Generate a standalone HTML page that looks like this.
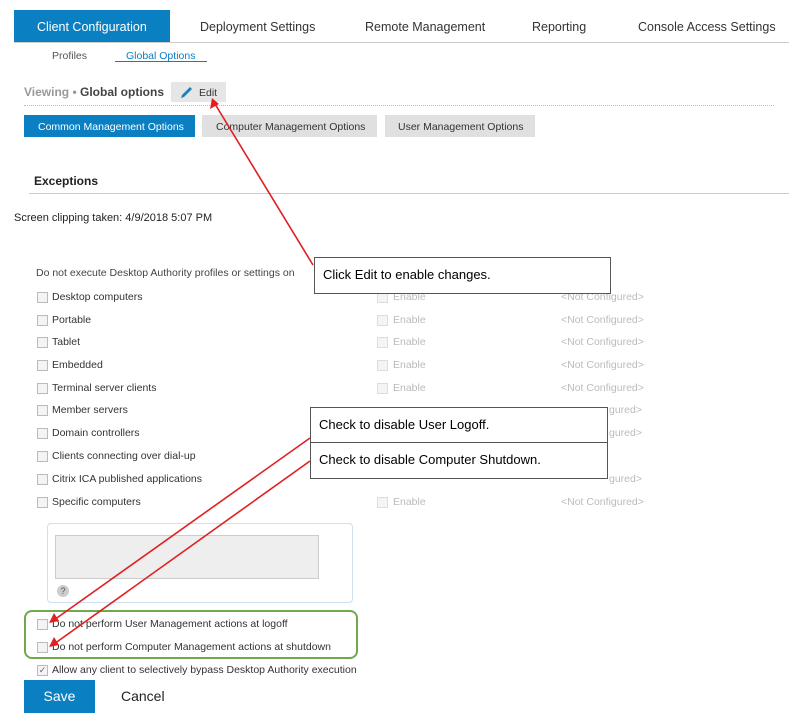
<!DOCTYPE html><html><head><style>
body{margin:0;width:789px;height:724px;background:#fff;font-family:"Liberation Sans",sans-serif;position:relative;overflow:hidden;color:#333}
.a{position:absolute;white-space:nowrap}
.t{font-size:12.5px;color:#333;line-height:16px}
.s{font-size:10.5px;line-height:12px}
.cb{position:absolute;width:9px;height:9px;border:1px solid #bbb;background:#f4f4f4}
.g{color:#bbb}
.box{position:absolute;border:1px solid #555;background:#fff;font-family:"Liberation Sans",sans-serif;font-size:13px;color:#000;box-sizing:border-box;padding:9px 0 0 8px}
</style></head><body>
<div class="a" style="left:14px;top:10px;width:156px;height:32px;background:#0a7fc2"></div>
<div class="a" style="left:14px;top:42px;width:775px;height:1px;background:#ccc"></div>
<div class="a t" style="left:37px;top:19px;color:#fff">Client Configuration</div>
<div class="a t" style="left:200px;top:19px">Deployment Settings</div>
<div class="a t" style="left:365px;top:19px">Remote Management</div>
<div class="a t" style="left:532px;top:19px">Reporting</div>
<div class="a t" style="left:638px;top:19px">Console Access Settings</div>
<div class="a s" style="left:52px;top:50px;color:#555">Profiles</div>
<div class="a s" style="left:126px;top:50px;color:#0a7fc2">Global Options</div>
<div class="a" style="left:115px;top:61px;width:92px;height:1px;background:#0a7fc2"></div>
<div class="a" style="left:24px;top:85px;font-size:12px;color:#999;font-weight:bold">Viewing •&nbsp;<span style="color:#444">Global options</span></div>
<div class="a" style="left:171px;top:82px;width:55px;height:20px;background:#e6e6e6"></div>
<svg class="a" style="left:179px;top:85px" width="16" height="15"><path d="M2 13 L3 10 L11 2 L13 4 L5 12 Z" fill="#1a7fc2"/></svg>
<div class="a s" style="left:199px;top:87px;color:#333">Edit</div>
<div class="a" style="left:24px;top:105px;width:750px;border-top:1px dotted #bbb"></div>
<div class="a" style="left:24px;top:115px;width:171px;height:22px;background:#0a7fc2"></div>
<div class="a" style="left:202px;top:115px;width:175px;height:22px;background:#e0e0e0"></div>
<div class="a" style="left:385px;top:115px;width:150px;height:22px;background:#e0e0e0"></div>
<div class="a s" style="left:38px;top:121px;color:#fff">Common Management Options</div>
<div class="a s" style="left:216px;top:121px">Computer Management Options</div>
<div class="a s" style="left:398px;top:121px">User Management Options</div>
<div class="a" style="left:34px;top:174px;font-size:12px;font-weight:bold;color:#222">Exceptions</div>
<div class="a" style="left:29px;top:193px;width:760px;height:1px;background:#ccc"></div>
<div class="a" style="left:14px;top:212px;font-size:11px;color:#222">Screen clipping taken: 4/9/2018 5:07 PM</div>
<div class="a s" style="left:36px;top:267px;color:#444">Do not execute Desktop Authority profiles or settings on</div>

<div class="cb" style="left:37px;top:292px"></div><div class="a s" style="left:52px;top:291px">Desktop computers</div>
<div class="cb" style="left:37px;top:315px"></div><div class="a s" style="left:52px;top:314px">Portable</div>
<div class="cb" style="left:37px;top:337px"></div><div class="a s" style="left:52px;top:336px">Tablet</div>
<div class="cb" style="left:37px;top:360px"></div><div class="a s" style="left:52px;top:359px">Embedded</div>
<div class="cb" style="left:37px;top:383px"></div><div class="a s" style="left:52px;top:382px">Terminal server clients</div>
<div class="cb" style="left:37px;top:405px"></div><div class="a s" style="left:52px;top:404px">Member servers</div>
<div class="cb" style="left:37px;top:428px"></div><div class="a s" style="left:52px;top:427px">Domain controllers</div>
<div class="cb" style="left:37px;top:451px"></div><div class="a s" style="left:52px;top:450px">Clients connecting over dial-up</div>
<div class="cb" style="left:37px;top:474px"></div><div class="a s" style="left:52px;top:473px">Citrix ICA published applications</div>
<div class="cb" style="left:37px;top:497px"></div><div class="a s" style="left:52px;top:496px">Specific computers</div>

<div class="cb" style="left:377px;top:292px;border-color:#ddd"></div><div class="a s g" style="left:393px;top:291px">Enable</div><div class="a s g" style="left:561px;top:291px">&lt;Not Configured&gt;</div>
<div class="cb" style="left:377px;top:315px;border-color:#ddd"></div><div class="a s g" style="left:393px;top:314px">Enable</div><div class="a s g" style="left:561px;top:314px">&lt;Not Configured&gt;</div>
<div class="cb" style="left:377px;top:337px;border-color:#ddd"></div><div class="a s g" style="left:393px;top:336px">Enable</div><div class="a s g" style="left:561px;top:336px">&lt;Not Configured&gt;</div>
<div class="cb" style="left:377px;top:360px;border-color:#ddd"></div><div class="a s g" style="left:393px;top:359px">Enable</div><div class="a s g" style="left:561px;top:359px">&lt;Not Configured&gt;</div>
<div class="cb" style="left:377px;top:383px;border-color:#ddd"></div><div class="a s g" style="left:393px;top:382px">Enable</div><div class="a s g" style="left:561px;top:382px">&lt;Not Configured&gt;</div>
<div class="a s g" style="left:609px;top:404px">gured&gt;</div>
<div class="a s g" style="left:609px;top:427px">gured&gt;</div>
<div class="a s g" style="left:609px;top:473px">gured&gt;</div>
<div class="cb" style="left:377px;top:497px;border-color:#ddd"></div><div class="a s g" style="left:393px;top:496px">Enable</div><div class="a s g" style="left:561px;top:496px">&lt;Not Configured&gt;</div>

<div class="a" style="left:47px;top:523px;width:304px;height:78px;border:1px solid #cfe0ee;border-radius:4px"></div>
<div class="a" style="left:55px;top:535px;width:262px;height:42px;background:#eee;border:1px solid #ccc"></div>
<div class="a" style="left:57px;top:585px;width:12px;height:12px;border-radius:50%;background:#ccc;font-size:9px;text-align:center;line-height:12px;color:#555">?</div>

<div class="a" style="left:24px;top:610px;width:334px;height:49px;border:2px solid #70a850;border-radius:8px;box-sizing:border-box"></div>
<div class="cb" style="left:37px;top:619px"></div><div class="a s" style="left:52px;top:618px">Do not perform User Management actions at logoff</div>
<div class="cb" style="left:37px;top:642px"></div><div class="a s" style="left:52px;top:641px">Do not perform Computer Management actions at shutdown</div>
<div class="cb" style="left:37px;top:665px;font-size:9px;line-height:9px;color:#666;text-align:center">✓</div><div class="a s" style="left:52px;top:664px">Allow any client to selectively bypass Desktop Authority execution</div>
<div class="a" style="left:24px;top:680px;width:71px;height:33px;background:#0a7fc2;color:#fff;font-size:14px;text-align:center;line-height:33px">Save</div>
<div class="a" style="left:121px;top:688px;font-size:14px;color:#222">Cancel</div>

<div class="box" style="left:314px;top:257px;width:297px;height:37px">Click Edit to enable changes.</div>
<div class="box" style="left:310px;top:407px;width:298px;height:36px">Check to disable User Logoff.</div>
<div class="box" style="left:310px;top:442px;width:298px;height:37px">Check to disable Computer Shutdown.</div>

<svg class="a" style="left:0;top:0" width="789" height="724">
<g stroke="#e02020" stroke-width="1.6" fill="#e02020">
<line x1="313" y1="265" x2="215" y2="104"/><polygon points="212,98 210,109 219,104" stroke="none"/>
<line x1="310" y1="438" x2="54" y2="620"/><polygon points="49,623 54,613 59,621" stroke="none"/>
<line x1="310" y1="461" x2="54" y2="644"/><polygon points="49,647 54,637 59,645" stroke="none"/>
</g></svg>
</body></html>
